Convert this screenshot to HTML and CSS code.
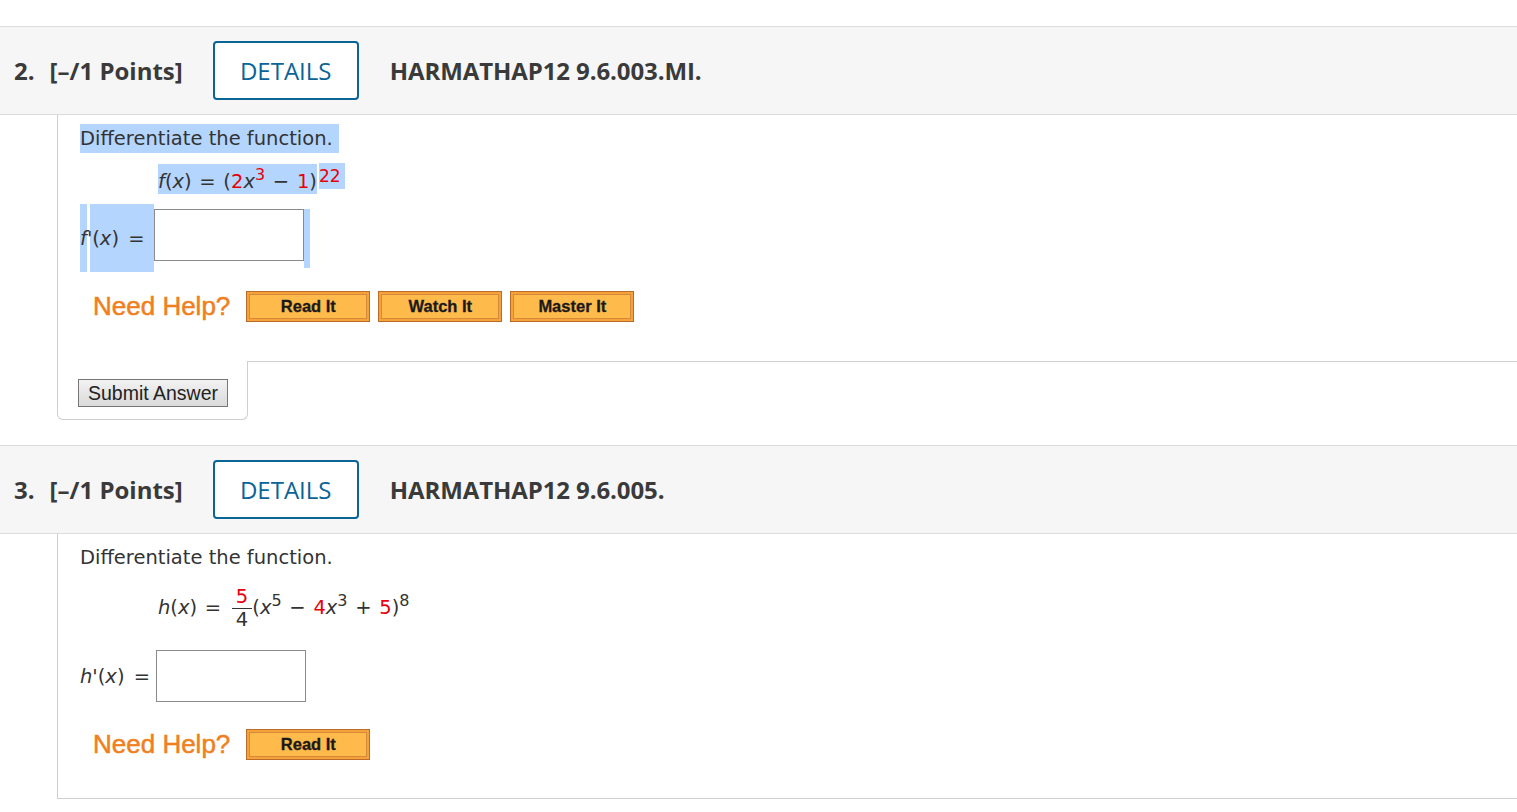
FILE: index.html
```html
<!DOCTYPE html>
<html>
<head>
<meta charset="utf-8">
<link rel="stylesheet" href="styles.css">
</head>
<body>
<div class="page">
  <section class="question">
    <div class="qhead">
      <span class="qnum">2.</span>
      <span class="pts">[–/1 Points]</span>
      <button class="details">DETAILS</button>
      <span class="code">HARMATHAP12 9.6.003.MI.</span>
    </div>
    <div class="qbody">
      <p class="prompt"><span class="sel">Differentiate the function.</span></p>
      <div class="formula f2"><span class="sel self"><i>f</i>(<i>x</i>) = (<span class="red">2</span><i>x</i><sup class="red">3</sup> − <span class="red">1</span>)</span><sup class="red sel">22</sup></div>
      <div class="answer">
        <span class="label sellabel"><i>f</i> '(<i>x</i>) =</span>
        <span class="box"></span>
        <span class="selbar"></span>
      </div>
      <div class="help">
        <span class="needhelp">Need Help?</span>
        <span class="hbtn"><span>Read It</span></span>
        <span class="hbtn"><span>Watch It</span></span>
        <span class="hbtn"><span>Master It</span></span>
      </div>
    </div>
    <div class="qfoot">
      <div class="submitbox"><button class="submit">Submit Answer</button></div>
      <div class="fill"></div>
    </div>
  </section>

  <section class="question q3">
    <div class="qhead">
      <span class="qnum">3.</span>
      <span class="pts">[–/1 Points]</span>
      <button class="details">DETAILS</button>
      <span class="code">HARMATHAP12 9.6.005.</span>
    </div>
    <div class="qbody last">
      <p class="prompt">Differentiate the function.</p>
      <div class="formula f3"><i>h</i>(<i>x</i>) = <span class="frac"><span class="num red">5</span><span class="den">4</span></span>(<i>x</i><sup>5</sup> − <span class="red">4</span><i>x</i><sup>3</sup> + <span class="red">5</span>)<sup>8</sup></div>
      <div class="answer a3">
        <span class="label"><i>h</i>'(<i>x</i>) =</span>
        <span class="box"></span>
      </div>
      <div class="help">
        <span class="needhelp">Need Help?</span>
        <span class="hbtn"><span>Read It</span></span>
      </div>
    </div>
  </section>
</div>
</body>
</html>
```
FILE: styles.css
```css
html, body {
  margin: 0;
  padding: 0;
  background: #fff;
}
.page {
  padding-top: 26px;
}
.question {
  margin-bottom: 25px;
}
.qhead {
  display: flex;
  align-items: center;
  height: 87px;
  border-top: 1px solid #dcdcdc;
  border-bottom: 1px solid #dcdcdc;
  background: #f6f6f6;
  padding-left: 14px;
  font-family: "Open Sans", sans-serif;
  font-size: 24px;
  font-weight: 700;
  color: #3a3a3a;
}
.qnum {
  margin-right: 15px;
}
.details {
  margin-left: 30px;
  width: 146px;
  height: 59px;
  box-sizing: border-box;
  border: 2px solid #0a6496;
  border-radius: 4px;
  background: #fff;
  color: #0a6496;
  font-family: "Open Sans", sans-serif;
  font-size: 24px;
  font-weight: 400;
  padding: 0;
}
.code {
  margin-left: 31px;
  letter-spacing: -0.1px;
}
.qbody {
  margin-left: 57px;
  border-left: 1px solid #cfcfcf;
  padding: 9px 0 39px 22px;
  font-family: "DejaVu Sans", Verdana, sans-serif;
  font-size: 19.5px;
  color: #333;
}
.qbody.last {
  border-bottom: 1px solid #cfcfcf;
  padding-bottom: 38px;
}
.prompt {
  margin: 0;
  line-height: 29px;
  height: 29px;
}
.sel {
  background: #b4d5fe;
}
.prompt .sel {
  display: inline-block;
  padding-right: 6px;
}
.red {
  color: #e8000b;
}
i {
  font-style: italic;
}
sup {
  font-size: 16px;
  line-height: 1;
  vertical-align: 8px;
}
.formula {
  margin-left: 78px;
  word-spacing: 1.5px;
}
.f2 {
  margin-top: 10px;
  height: 28px;
  line-height: 28px;
}
.f2 .self {
  display: inline-block;
  line-height: 25px;
  padding-top: 3px;
}
.f2 > sup.sel {
  display: inline-block;
  font-size: 17px;
  line-height: 26px;
  vertical-align: 6px;
  margin-left: 2px;
  padding-right: 4px;
}
.answer {
  display: flex;
  align-items: flex-start;
  margin-top: 13px;
}
.label {
  display: flex;
  align-items: center;
  width: 74px;
  height: 68px;
  box-sizing: border-box;
  white-space: nowrap;
  word-spacing: 3px;
}
.sellabel {
  background: linear-gradient(to right, #b4d5fe 0 7px, #fff 7px 10px, #b4d5fe 10px);
}
.box {
  display: block;
  width: 150px;
  height: 52px;
  margin-top: 5px;
  box-sizing: border-box;
  border: 1px solid #8a8a8a;
  background: #fff;
}
.selbar {
  display: block;
  width: 6px;
  height: 59px;
  margin-top: 5px;
  background: #b4d5fe;
}
.help {
  display: flex;
  align-items: center;
  margin-top: 19px;
  height: 31px;
}
.needhelp {
  margin-left: 13px;
  margin-right: 16px;
  font-family: "Liberation Sans", Arial, sans-serif;
  font-size: 26px;
  color: #f0801e;
  -webkit-text-stroke: 0.5px #f0801e;
}
.hbtn {
  display: block;
  width: 124px;
  height: 31px;
  box-sizing: border-box;
  margin-right: 8px;
  border: 1px solid #b86d2a;
  background: #f7a13a;
  padding: 2px;
}
.hbtn span {
  display: flex;
  align-items: center;
  justify-content: center;
  height: 100%;
  box-sizing: border-box;
  border: 1px solid #d48a3a;
  background: #ffba4c;
  font-family: "Liberation Sans", Arial, sans-serif;
  font-weight: 700;
  font-size: 16.5px;
  color: #1a1a1a;
  -webkit-text-stroke: 0.3px #1a1a1a;
}
.qfoot {
  display: flex;
}
.submitbox {
  margin-left: 57px;
  width: 191px;
  height: 59px;
  box-sizing: border-box;
  border-left: 1px solid #cfcfcf;
  border-right: 1px solid #cfcfcf;
  border-bottom: 1px solid #cfcfcf;
  border-radius: 0 0 6px 6px;
  padding: 18px 0 0 20px;
}
.fill {
  flex: 1;
  border-top: 1px solid #cfcfcf;
}
.submit {
  display: block;
  width: 150px;
  height: 28px;
  box-sizing: border-box;
  border: 1px solid #777;
  background: linear-gradient(#f2f2f2, #dadada);
  font-family: "Liberation Sans", Arial, sans-serif;
  font-size: 19.5px;
  color: #222;
  padding: 0;
}
.f3 {
  margin-top: 13px;
  height: 46px;
  line-height: 46px;
}
.frac {
  display: inline-flex;
  flex-direction: column;
  align-items: center;
  vertical-align: middle;
  line-height: 20px;
  margin: 0 0 0 3px;
}
.frac .num {
  border-bottom: 1px solid #333;
  padding: 0 4px 1px;
}
.frac .den {
  padding-top: 1px;
}
.a3 {
  margin-top: 14px;
}
.a3 .label {
  width: 76px;
  height: 62px;
}
.a3 .box {
  margin-top: 5px;
}
.last .help {
  margin-top: 22px;
}
```
